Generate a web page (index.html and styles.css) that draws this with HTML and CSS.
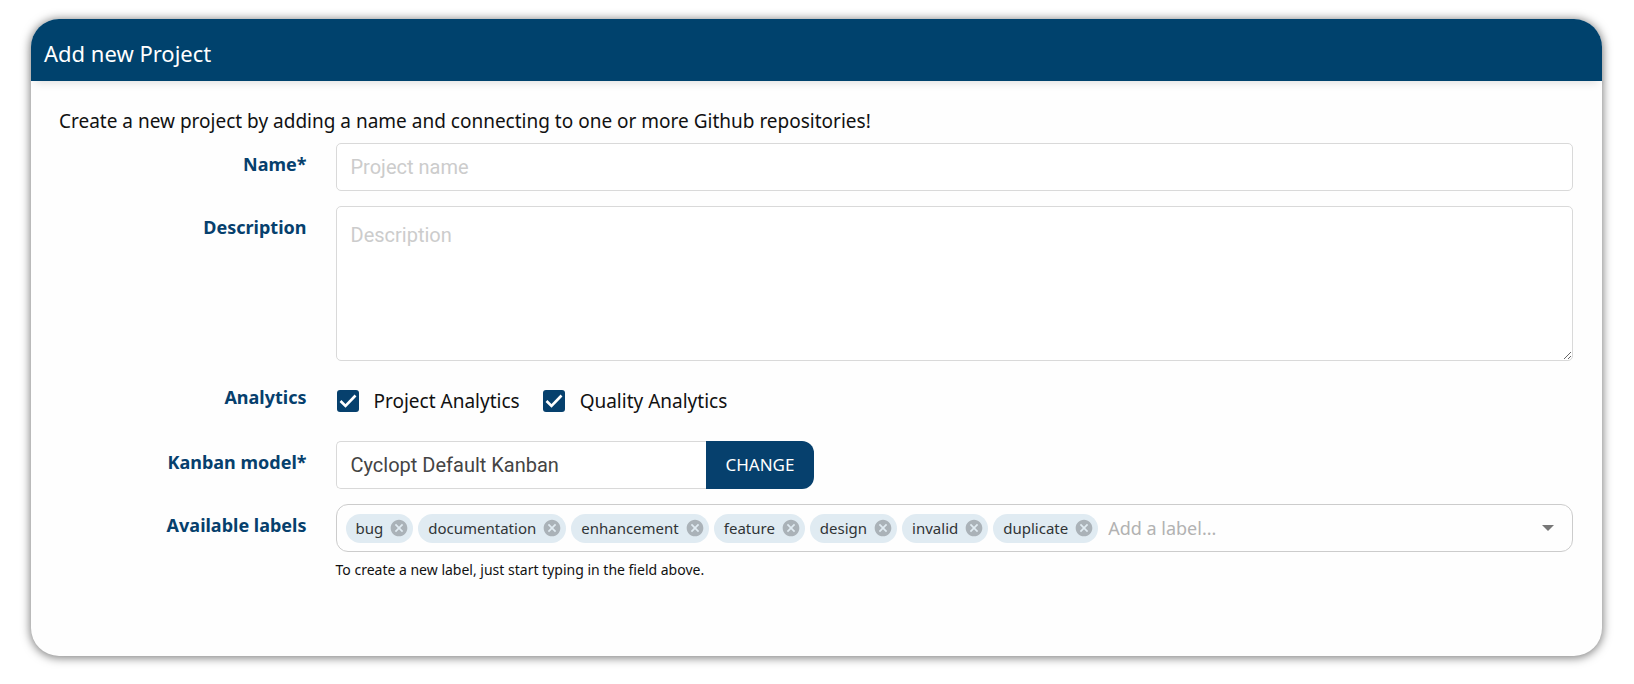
FILE: index.html
```html
<!DOCTYPE html>
<html lang="en">
<head>
<meta charset="utf-8">
<meta name="viewport" content="width=device-width, initial-scale=1">
<title>Add new Project</title>
<link rel="stylesheet" href="styles.css">
</head>
<body>
<svg class="sprite" aria-hidden="true">
  <symbol id="cancel" viewBox="0 0 24 24">
    <path d="M12 2C6.47 2 2 6.47 2 12s4.47 10 10 10 10-4.47 10-10S17.53 2 12 2zm5 13.59L15.59 17 12 13.41 8.41 17 7 15.59 10.59 12 7 8.41 8.41 7 12 10.59 15.59 7 17 8.41 13.41 12 17 15.59z"/>
  </symbol>
</svg>
<main class="card">
  <header class="card-header"><h1 class="card-title">Add new Project</h1></header>
  <form class="card-body">
    <p class="intro">Create a new project by adding a name and connecting to one or more Github repositories!</p>
    <div class="row">
      <label class="label" for="name">Name*</label>
      <input class="field" id="name" type="text" placeholder="Project name">
    </div>
    <div class="row">
      <label class="label" for="description">Description</label>
      <textarea class="field area" id="description" placeholder="Description"></textarea>
    </div>
    <div class="row row-checks" role="group" aria-labelledby="analytics">
      <span class="label" id="analytics">Analytics</span>
      <div class="checks">
        <label class="check"><input class="box" type="checkbox" checked>Project Analytics</label>
        <label class="check"><input class="box" type="checkbox" checked>Quality Analytics</label>
      </div>
    </div>
    <div class="row">
      <label class="label" for="kanban">Kanban model*</label>
      <div class="group">
        <input class="field group-field" id="kanban" type="text" value="Cyclopt Default Kanban" readonly>
        <button class="change" type="button">CHANGE</button>
      </div>
    </div>
    <div class="row">
      <label class="label" for="labels">Available labels</label>
      <div>
        <div class="tags">
          <span class="chip">bug<button class="remove" type="button" aria-label="Remove bug"><svg class="icon"><use href="#cancel"/></svg></button></span>
          <span class="chip">documentation<button class="remove" type="button" aria-label="Remove documentation"><svg class="icon"><use href="#cancel"/></svg></button></span>
          <span class="chip">enhancement<button class="remove" type="button" aria-label="Remove enhancement"><svg class="icon"><use href="#cancel"/></svg></button></span>
          <span class="chip">feature<button class="remove" type="button" aria-label="Remove feature"><svg class="icon"><use href="#cancel"/></svg></button></span>
          <span class="chip">design<button class="remove" type="button" aria-label="Remove design"><svg class="icon"><use href="#cancel"/></svg></button></span>
          <span class="chip">invalid<button class="remove" type="button" aria-label="Remove invalid"><svg class="icon"><use href="#cancel"/></svg></button></span>
          <span class="chip">duplicate<button class="remove" type="button" aria-label="Remove duplicate"><svg class="icon"><use href="#cancel"/></svg></button></span>
          <input class="tag-input" id="labels" type="text" placeholder="Add a label...">
          <button class="toggle" type="button" aria-label="Show labels"><svg class="arrow" viewBox="0 0 12 6"><path d="M0 0h12L6 6z"/></svg></button>
        </div>
        <p class="hint">To create a new label, just start typing in the field above.</p>
      </div>
    </div>
  </form>
</main>
</body>
</html>
```
FILE: styles.css
```css
* { box-sizing: border-box; }

body {
  margin: 0;
  padding: 19px 32px 27px 31px;
  background: #fff;
  color: #111;
  font: 18px/24px "Noto Sans", sans-serif;
}

h1, p { margin: 0; }

input, textarea, button { font: inherit; }

.sprite { display: none; }

.card {
  border-radius: 28px;
  background: #fefefe;
  box-shadow: 0 1px 10px 1px rgba(0, 0, 0, 0.5);
}

.card-header {
  padding: 20px 13px 14px;
  border-radius: 28px 28px 0 0;
  background: #00426d;
  box-shadow: 0 6px 8px -4px rgba(0, 0, 0, 0.12);
}

.card-title {
  color: #fff;
  font-size: 22px;
  font-weight: 400;
  line-height: 28px;
}

.card-body {
  display: grid;
  gap: 15px;
  padding: 28px 29px 76px 28px;
}

.intro { margin-bottom: -5px; font-size: 19px; }

.row {
  display: grid;
  grid-template-columns: 1fr 5fr;
  column-gap: 29px;
}

.row-checks { padding: 9px 0 13px; }

.label {
  padding-top: 9px;
  color: #06406d;
  font-weight: 700;
  text-align: right;
}

.row-checks .label { padding-top: 0; }

.field {
  width: 100%;
  height: 48px;
  padding: 0 14px;
  border: 1px solid #d9d9d9;
  border-radius: 5px;
  background: #fff;
  color: #444;
  font-family: Roboto, sans-serif;
  font-size: 20px;
  outline: none;
}

.area {
  display: block;
  height: 155px;
  padding-top: 16px;
  resize: vertical;
}

.field::placeholder { color: #ccc; opacity: 1; }

.checks { display: flex; gap: 22px; padding-top: 4px; font-size: 19px; }

.check { display: flex; align-items: center; gap: 15px; }

.box {
  width: 22px;
  height: 22px;
  margin: 0 0 0 1px;
  appearance: none;
  border-radius: 3px;
  background: #06406d;
}

.box:checked {
  background: #06406d url("data:image/svg+xml,%3Csvg xmlns='http://www.w3.org/2000/svg' viewBox='0 0 22 22'%3E%3Cpath d='M3.5 11l5 5L18.5 5.500' fill='none' stroke='white' stroke-width='2.6'/%3E%3C/svg%3E");
}

.group { display: flex; }

.group-field {
  max-width: 370px;
  border-right: 0;
  border-radius: 5px 0 0 5px;
}

.change {
  padding: 0 20px;
  border: 0;
  border-radius: 0 12px 12px 0;
  background: #06406d;
  color: #fff;
  font-size: 17px;
}

.tags {
  display: flex;
  flex-wrap: wrap;
  align-items: center;
  gap: 5px;
  min-height: 48px;
  padding: 8px 16px 8px 9px;
  border: 1px solid #ccc;
  border-radius: 12px;
}

.chip {
  display: flex;
  align-items: center;
  gap: 6px;
  height: 29px;
  padding: 0 4px 0 10px;
  border-radius: 15px;
  background: #e0ebf2;
  color: #303436;
  font-size: 15px;
}

.remove, .toggle {
  display: flex;
  padding: 0;
  border: 0;
  background: none;
}

.icon { width: 20px; height: 20px; fill: #aab2b8; }

.tag-input {
  flex: 1;
  min-width: 120px;
  padding: 0 5px;
  border: 0;
  background: none;
  outline: none;
}

.tag-input::placeholder { color: #b2b2b2; opacity: 1; }

.toggle { padding: 4px 2px; }

.arrow { width: 12px; height: 6px; fill: #777; }

.hint {
  padding-top: 8px;
  font-size: 14px;
  line-height: 20px;
}
```
